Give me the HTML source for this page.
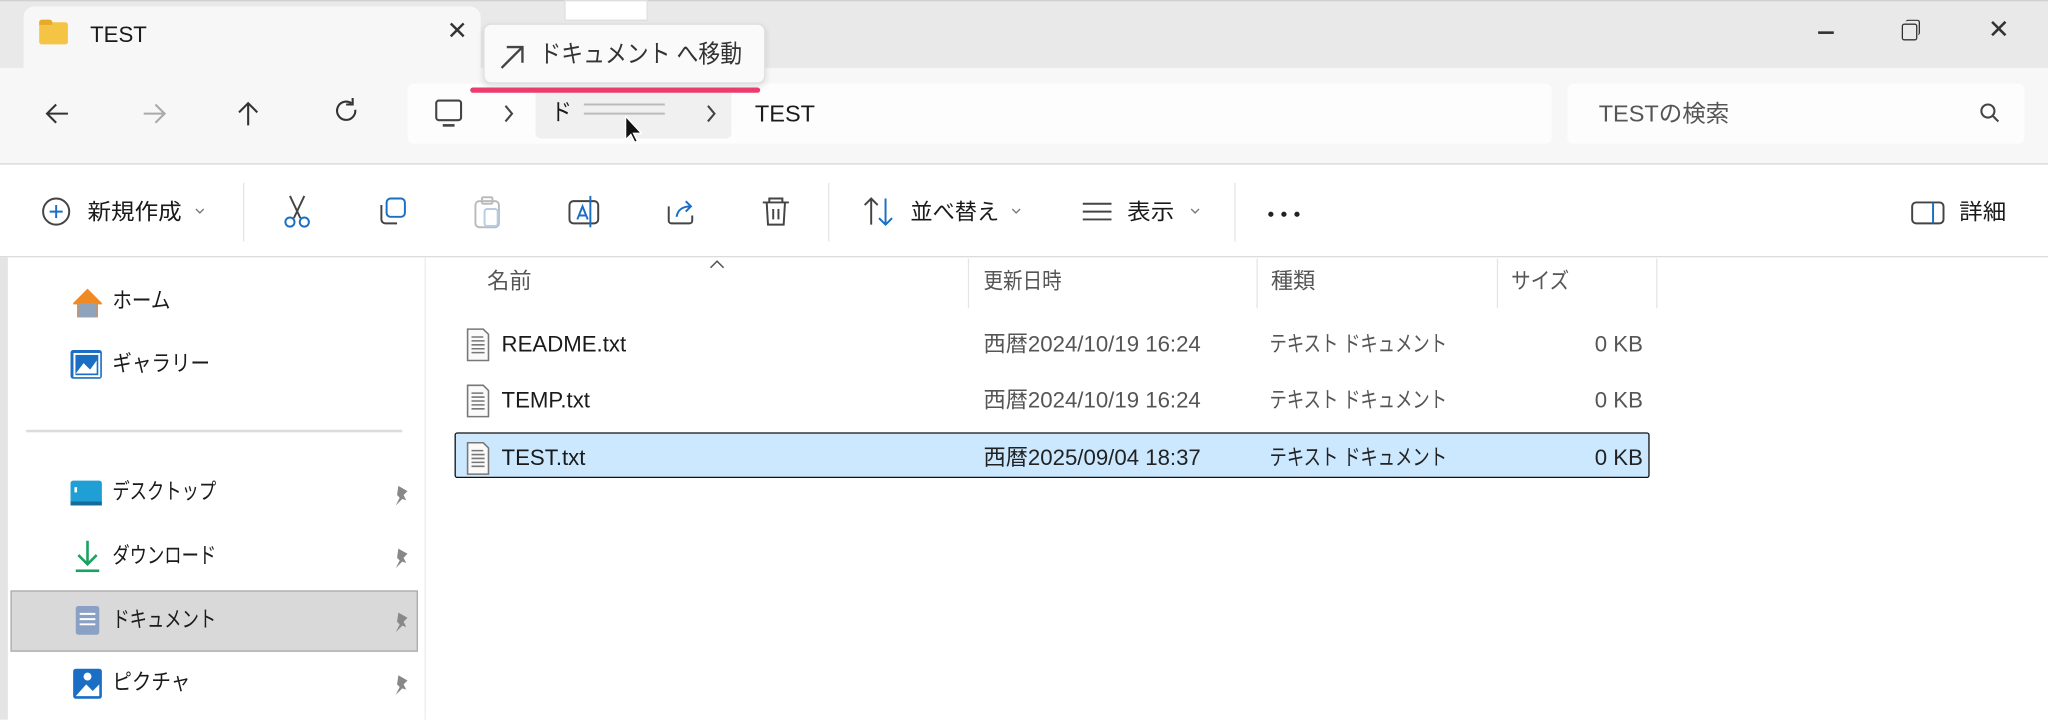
<!DOCTYPE html>
<html><head><meta charset="utf-8"><style>
html,body{margin:0;padding:0;width:2048px;height:719px;overflow:hidden;background:#fff}
#w{position:absolute;left:0;top:0;width:1568px;height:551px;transform:scale(1.30612);transform-origin:0 0;font-family:"Liberation Sans","Noto Sans CJK JP",sans-serif;color:#1a1a1a;font-size:16px;background:#fff}
.a{position:absolute}
.c{display:inline-block;transform:scaleX(.88);transform-origin:0 50%;white-space:nowrap}
.l{display:inline-block;transform:scaleX(1.0);transform-origin:0 50%;white-space:nowrap}
.k{display:inline-block;transform:scaleX(.78);transform-origin:0 50%;white-space:nowrap}
.b{display:inline-block;transform:scaleX(1.06);transform-origin:0 50%;white-space:nowrap}
.t{position:absolute;white-space:nowrap;line-height:20px}
svg{position:absolute;overflow:visible}
</style></head><body><div id="w">
<!-- title bar -->
<div class="a" style="left:0;top:0;width:1568px;height:52px;background:#e9e9e9;border-top:1px solid #d0d0d0"></div>
<div class="a" style="left:18px;top:5px;width:350px;height:47px;background:#f7f7f7;border-radius:8px 8px 0 0"></div>
<div class="a" style="left:30px;top:17px;width:22px;height:17px;background:#f6c445;border-radius:2px"></div>
<div class="a" style="left:30px;top:15px;width:10px;height:4px;background:#e6a92a;border-radius:2px 2px 0 0"></div>
<div class="t" style="left:69px;top:17px;font-size:17px"><span class="l">TEST</span></div>
<div class="t" style="left:342px;top:15px;font-size:19px;color:#333">✕</div>
<div class="a" style="left:432px;top:0;width:62px;height:14px;background:#fff;border:1px solid #ddd"></div>
<!-- window controls -->
<div class="a" style="left:1392px;top:24px;width:12px;height:1.5px;background:#333"></div>
<div class="a" style="left:1456px;top:18px;width:10px;height:11px;border:1.5px solid #333;border-radius:2px"></div>
<div class="a" style="left:1459px;top:15px;width:10px;height:11px;border-top:1.5px solid #333;border-right:1.5px solid #333;border-radius:2px"></div>
<div class="t" style="left:1522px;top:13px;font-size:20px;color:#333">✕</div>
<!-- address row -->
<div class="a" style="left:0;top:52px;width:1568px;height:73px;background:#f7f7f7;border-bottom:1px solid #d8d8d8"></div>
<svg style="left:0;top:0" width="1568" height="130" fill="none" stroke-width="1.6">
<path d="M52 87H36M43 80l-7 7 7 7" stroke="#333"/>
<path d="M110 87h16M119 80l7 7-7 7" stroke="#aaa"/>
<path d="M190 96V79M183 86l7-7 7 7" stroke="#333"/>
<path d="M272 84a7 7 0 1 1-3-5M270 75v5h-5" stroke="#333"/>
</svg>
<div class="a" style="left:312px;top:64px;width:876px;height:46px;background:#fdfdfd;border-radius:5px"></div>
<div class="a" style="left:410px;top:68px;width:150px;height:38px;background:#f0f0f0;border-radius:4px"></div>
<svg style="left:0;top:0" width="1568" height="130" fill="none" stroke-width="1.6">
<rect x="334" y="77" width="19" height="15" rx="2" stroke="#444"/><path d="M339 96h9" stroke="#444" stroke-width="2"/>
<path d="M387 81l5 6-5 6M542 81l5 6-5 6" stroke="#444"/>
<path d="M447 80h62M447 87h62" stroke="#bbb"/>
<path d="M479 89v18l4-4 3 6 2-1-3-6h6z" fill="#111" stroke="#fff" stroke-width="1"/>
</svg>
<div class="t" style="left:422px;top:76px;font-size:18px"><span class="c">ド</span></div>
<div class="t" style="left:578px;top:77px;font-size:18px"><span class="l">TEST</span></div>
<div class="a" style="left:1200px;top:64px;width:350px;height:46px;background:#fdfdfd;border-radius:5px"></div>
<svg style="left:0;top:0" width="1568" height="130" fill="none" stroke-width="1.6"><circle cx="1522" cy="85" r="5" stroke="#444"/><path d="M1526 89l4 4" stroke="#444"/></svg>
<div class="t" style="left:1224px;top:77px;font-size:18px;color:#555"><span class="l">TESTの検索</span></div>
<!-- toolbar -->
<div class="a" style="left:0;top:196px;width:1568px;height:1px;background:#dcdcdc"></div>
<div class="a" style="left:186px;top:140px;width:1px;height:45px;background:#e5e5e5"></div>
<div class="a" style="left:634px;top:140px;width:1px;height:45px;background:#e5e5e5"></div>
<div class="a" style="left:945px;top:140px;width:1px;height:45px;background:#e5e5e5"></div>
<svg style="left:0;top:0" width="1568" height="200" fill="none" stroke-width="1.5">
<circle cx="43" cy="162" r="10" stroke="#444"/><path d="M43 157v10M38 162h10" stroke="#1a6fc4"/>
<path d="M150 160l3 3 3-3" stroke="#777" stroke-width="1"/>
<path d="M222 150l8 17M233 150l-8 17" stroke="#444"/><circle cx="222" cy="170" r="3.5" stroke="#1a6fc4"/><circle cx="233" cy="170" r="3.5" stroke="#1a6fc4"/>
<rect x="296" y="152" width="14" height="14" rx="3" stroke="#1a6fc4"/><path d="M292 157v11a3 3 0 0 0 3 3h9" stroke="#444"/>
<rect x="364" y="154" width="18" height="20" rx="3" stroke="#bbb"/><rect x="369" y="151" width="8" height="5" rx="1" stroke="#bbb"/><rect x="371" y="160" width="10" height="13" rx="2" stroke="#b8cde5"/>
<rect x="436" y="154" width="22" height="17" rx="3" stroke="#444"/><path d="M442 168l4-10 4 10M443 165h6M452 150v24" stroke="#1a6fc4"/>
<path d="M512 158v11a2 2 0 0 0 2 2h14a2 2 0 0 0 2-2v-4" stroke="#444"/><path d="M518 166c1-6 5-8 11-8M525 154l4 4-4 4" stroke="#1a6fc4"/>
<path d="M584 155h20M589 155v-3h10v3M587 155l1 17h12l1-17M592 160v8M596 160v8" stroke="#444"/>
<path d="M667 172v-20M662 157l5-5 5 5" stroke="#444"/><path d="M678 152v20M673 167l5 5 5-5" stroke="#1a6fc4"/>
<path d="M775 160l3 3 3-3M912 160l3 3 3-3" stroke="#777" stroke-width="1"/>
<path d="M829 156h22M829 162h22M829 168h22" stroke="#444"/>
<circle cx="973" cy="164" r="2" fill="#222" stroke="none"/><circle cx="983" cy="164" r="2" fill="#222" stroke="none"/><circle cx="993" cy="164" r="2" fill="#222" stroke="none"/>
<rect x="1464" y="155" width="24" height="16" rx="3" stroke="#444"/><path d="M1480 155v16" stroke="#1a6fc4"/>
</svg>
<div class="t" style="left:67px;top:153px;font-size:17px"><span class="b">新規作成</span></div>
<div class="t" style="left:697px;top:153px;font-size:17px"><span class="l">並べ替え</span></div>
<div class="t" style="left:863px;top:153px;font-size:17px"><span class="b">表示</span></div>
<div class="t" style="left:1500px;top:153px;font-size:17px"><span class="b">詳細</span></div>
<!-- sidebar -->
<div class="a" style="left:0;top:197px;width:6px;height:354px;background:#e4e4e4"></div>
<div class="a" style="left:325px;top:197px;width:1px;height:354px;background:#ececec"></div>
<div class="a" style="left:20px;top:329px;width:288px;height:2px;background:#dcdcdc"></div>
<div class="a" style="left:8px;top:452px;width:310px;height:45px;background:#d9d9d9;border:1px solid #aaa"></div>
<svg style="left:0;top:0" width="330" height="551" stroke="none">
<path d="M56 232l11-11 11 11v1h-3v10h-16v-10h-3z" fill="#f08a24"/><rect x="60" y="232" width="14" height="11" fill="#8fa4bb"/>
<rect x="54" y="268" width="24" height="22" rx="2" fill="#1a6fc4"/><path d="M58 286l6-8 5 5 5-7v10z" fill="#fff"/><rect x="57" y="271" width="19" height="17" fill="none" stroke="#fff" stroke-width="1.5"/>
<rect x="54" y="368" width="24" height="18" rx="2" fill="#1f9fd6"/><rect x="54" y="384" width="24" height="3" fill="#126b9a"/><rect x="57" y="373" width="2" height="4" fill="#fff"/>
<path d="M67 414v18M60 425l7 7 7-7" stroke="#1aa260" stroke-width="2" fill="none"/><rect x="58" y="436" width="18" height="2" fill="#1aa260"/>
<rect x="58" y="464" width="18" height="22" rx="2" fill="#8aa0c4"/><path d="M61 470h12M61 474h12M61 478h12" stroke="#fff" stroke-width="1.5"/>
<rect x="56" y="512" width="22" height="23" rx="2" fill="#1a6fc4"/><path d="M58 533l8-9 5 5 5-5v9z" fill="#fff"/><circle cx="67" cy="518" r="3" fill="#fff"/>
<g fill="#888"><path d="M305 372l7 4-3 3 2 4-3-1-5 5 3-6-2-2z"/><path d="M305 420l7 4-3 3 2 4-3-1-5 5 3-6-2-2z"/><path d="M305 469l7 4-3 3 2 4-3-1-5 5 3-6-2-2z"/><path d="M305 517l7 4-3 3 2 4-3-1-5 5 3-6-2-2z"/></g>
</svg>
<div class="t" style="left:86px;top:221px;font-size:17px"><span class="c">ホーム</span></div>
<div class="t" style="left:86px;top:269px;font-size:17px"><span class="c">ギャラリー</span></div>
<div class="t" style="left:86px;top:367px;font-size:17px"><span class="k">デスクトップ</span></div>
<div class="t" style="left:86px;top:416px;font-size:17px"><span class="k">ダウンロード</span></div>
<div class="t" style="left:86px;top:465px;font-size:17px"><span class="k">ドキュメント</span></div>
<div class="t" style="left:86px;top:513px;font-size:17px"><span class="c">ピクチャ</span></div>
<!-- columns -->
<div class="a" style="left:741px;top:198px;width:1px;height:38px;background:#e5e5e5"></div>
<div class="a" style="left:962px;top:198px;width:1px;height:38px;background:#e5e5e5"></div>
<div class="a" style="left:1146px;top:198px;width:1px;height:38px;background:#e5e5e5"></div>
<div class="a" style="left:1268px;top:198px;width:1px;height:38px;background:#e5e5e5"></div>
<svg style="left:0;top:0" width="1568" height="551" fill="none"><path d="M544 205l5-5 5 5" stroke="#555" stroke-width="1.2"/></svg>
<div class="t" style="left:373px;top:206px;font-size:17px;color:#555"><span class="l">名前</span></div>
<div class="t" style="left:753px;top:206px;font-size:17px;color:#555"><span class="c">更新日時</span></div>
<div class="t" style="left:973px;top:206px;font-size:17px;color:#555"><span class="l">種類</span></div>
<div class="t" style="left:1157px;top:206px;font-size:17px;color:#555"><span class="c">サイズ</span></div>
<div class="a" style="left:348px;top:331px;width:913px;height:33px;background:#cce8ff;border:1.5px solid #111;border-radius:2px"></div>
<svg style="left:0;top:0" width="1568" height="551" fill="#fafafa" stroke="#777" stroke-width="1.2">
<path d="M358 252h12l4 4v20h-16z"/><path d="M361 258h9M361 261h10M361 264h10M361 267h10M361 270h10"/>
<path d="M358 295h12l4 4v20h-16z"/><path d="M361 301h9M361 304h10M361 307h10M361 310h10M361 313h10"/>
<path d="M358 339h12l4 4v20h-16z"/><path d="M361 345h9M361 348h10M361 351h10M361 354h10M361 357h10"/>
</svg>
<div class="t" style="left:384px;top:254px;font-size:17px"><span class="l">README.txt</span></div>
<div class="t" style="left:384px;top:297px;font-size:17px"><span class="l">TEMP.txt</span></div>
<div class="t" style="left:384px;top:341px;font-size:17px"><span class="l">TEST.txt</span></div>
<div class="t" style="left:753px;top:254px;font-size:17px;color:#555"><span class="l">西暦2024/10/19 16:24</span></div>
<div class="t" style="left:753px;top:297px;font-size:17px;color:#555"><span class="l">西暦2024/10/19 16:24</span></div>
<div class="t" style="left:753px;top:341px;font-size:17px;color:#222"><span class="l">西暦2025/09/04 18:37</span></div>
<div class="t" style="left:972px;top:254px;font-size:17px;color:#555"><span class="k">テキスト ドキュメント</span></div>
<div class="t" style="left:972px;top:297px;font-size:17px;color:#555"><span class="k">テキスト ドキュメント</span></div>
<div class="t" style="left:972px;top:341px;font-size:17px;color:#222"><span class="k">テキスト ドキュメント</span></div>
<div class="t" style="left:1221px;top:254px;font-size:17px;color:#555"><span class="l">0 KB</span></div>
<div class="t" style="left:1221px;top:297px;font-size:17px;color:#555"><span class="l">0 KB</span></div>
<div class="t" style="left:1221px;top:341px;font-size:17px;color:#222"><span class="l">0 KB</span></div>
<!-- tooltip (on top) -->
<div class="a" style="left:370px;top:18px;width:214px;height:44px;background:#fafafa;border:1px solid #e0e0e0;border-radius:6px;box-shadow:0 2px 5px rgba(0,0,0,.12)"></div>
<svg style="left:0;top:0" width="600" height="80" fill="none"><path d="M384 52l16-16M388 36h12v12" stroke="#444" stroke-width="1.8"/></svg>
<div class="t" style="left:413px;top:33px;font-size:19px;color:#333"><span class="c">ドキュメント へ移動</span></div>
<div class="a" style="left:360px;top:67px;width:222px;height:4px;background:#ea3d6e;border-radius:2px"></div>
</div></body></html>
